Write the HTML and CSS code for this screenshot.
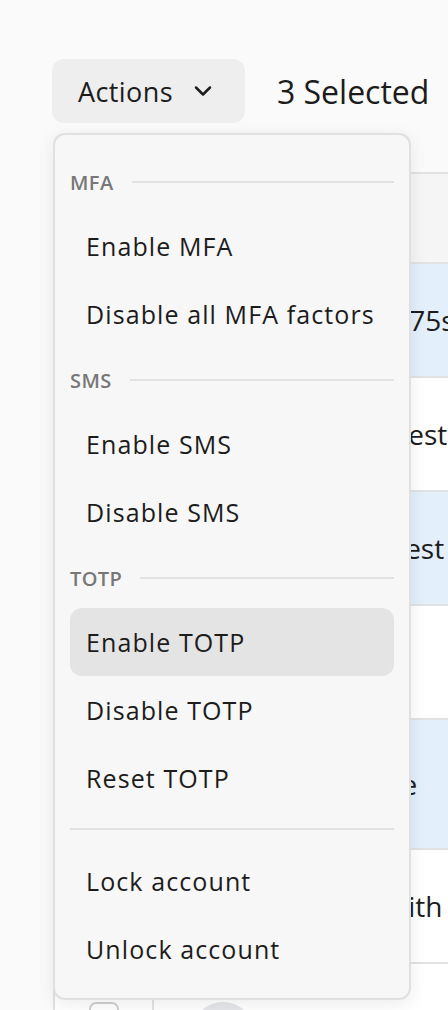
FILE: index.html
```html
<!DOCTYPE html>
<html lang="en">
<head>
<meta charset="utf-8">
<title>Users – Actions</title>
<link rel="stylesheet" href="styles.css">
</head>
<body>
<div class="page">
  <div class="toolbar">
    <button class="actions-btn" type="button">
      <span>Actions</span>
      <svg class="chev" viewBox="0 0 24 24" width="24" height="24" aria-hidden="true"><path d="M5 8.5l7 7 7-7" fill="none" stroke="#1f1f1f" stroke-width="2.5" stroke-linecap="round" stroke-linejoin="round"/></svg>
    </button>
    <span class="selected-count">3 Selected</span>
  </div>

  <div class="table">
    <div class="row head">
      <div class="cell check"><span class="box"></span></div>
      <div class="cell name">Name</div>
    </div>
    <div class="row sel">
      <div class="cell check"><span class="box on"></span></div>
      <div class="cell name"><span class="avatar">TU</span><span class="txt">test_user_75s</span></div>
    </div>
    <div class="row">
      <div class="cell check"><span class="box"></span></div>
      <div class="cell name"><span class="avatar">MT</span><span class="txt">Mariana Test</span></div>
    </div>
    <div class="row sel">
      <div class="cell check"><span class="box on"></span></div>
      <div class="cell name"><span class="avatar">JT</span><span class="txt">Julianne Test</span></div>
    </div>
    <div class="row">
      <div class="cell check"><span class="box"></span></div>
      <div class="cell name"><span class="avatar">JD</span><span class="txt">Jane Doe</span></div>
    </div>
    <div class="row sel tall">
      <div class="cell check"><span class="box on"></span></div>
      <div class="cell name"><span class="avatar">LM</span><span class="txt">Lea Moore</span></div>
    </div>
    <div class="row">
      <div class="cell check"><span class="box"></span></div>
      <div class="cell name"><span class="avatar">LS</span><span class="txt">Laurie Smith</span></div>
    </div>
    <div class="row">
      <div class="cell check"><span class="box"></span></div>
      <div class="cell name"><span class="avatar">MM</span><span class="txt">Kyle Klocko</span></div>
    </div>
  </div>

  <div class="menu" role="menu">
    <div class="group-label"><span>MFA</span><i></i></div>
    <div class="item">Enable MFA</div>
    <div class="item">Disable all MFA factors</div>
    <div class="group-label"><span>SMS</span><i></i></div>
    <div class="item">Enable SMS</div>
    <div class="item">Disable SMS</div>
    <div class="group-label"><span>TOTP</span><i></i></div>
    <div class="item active">Enable TOTP</div>
    <div class="item">Disable TOTP</div>
    <div class="item">Reset TOTP</div>
    <div class="sep"></div>
    <div class="item">Lock account</div>
    <div class="item">Unlock account</div>
  </div>
</div>
</body>
</html>
```

FILE: styles.css
```css
* { box-sizing: border-box; }
html, body {
  margin: 0;
  background: #fafafa;
  overflow: hidden;
}
body {
  font-family: "Open Sans", "Noto Sans", sans-serif;
  color: #1c1c1c;
}
.page {
  position: relative;
  width: 448px;
  height: 1010px;
  padding: 59px 0 0 52px;
}
.toolbar {
  display: flex;
  align-items: center;
  gap: 32px;
  height: 64px;
}
.actions-btn {
  display: flex;
  align-items: center;
  gap: 18px;
  height: 64px;
  padding: 0 30px 0 26px;
  border: none;
  border-radius: 12px;
  background: #eeeeee;
  font: inherit;
  font-size: 27px;
  font-weight: 500;
  letter-spacing: 0.4px;
  color: #1c1c1c;
}
.chev { display: block; }
.selected-count {
  font-size: 32px;
  font-weight: 500;
  white-space: nowrap;
}

.table {
  margin: 49px 0 0 1px;
  width: 640px;
  border-left: 2px solid #e2e2e2;
  border-top: 2px solid #e2e2e2;
}
.row {
  display: flex;
  height: 114px;
  background: #ffffff;
  border-bottom: 2px solid #e2e2e2;
}
.row.head { height: 90px; background: #f5f5f5; }
.row.sel { background: #e3effb; }
.row.tall { height: 130px; }
.cell {
  display: flex;
  align-items: center;
}
.cell.check {
  width: 99px;
  justify-content: center;
  border-right: 2px solid #e2e2e2;
}
.box {
  width: 30px;
  height: 30px;
  border: 2px solid #cfcfcf;
  border-radius: 7px;
  background: #fff;
}
.box.on { background: #2f7de1; border-color: #2f7de1; }
.cell.name {
  padding-left: 38px;
  gap: 24px;
  font-size: 28px;
  white-space: nowrap;
}
.row.head .cell.name { font-weight: 700; font-size: 24px; color: #555; }
.avatar {
  width: 62px;
  height: 62px;
  border-radius: 50%;
  background: #e4e6ea;
  display: flex;
  align-items: center;
  justify-content: center;
  font-size: 20px;
  font-weight: 700;
  color: #333;
  flex: none;
}
.row:last-child .cell { align-items: flex-start; padding-top: 38px; }

.menu {
  position: absolute;
  top: 133px;
  left: 53px;
  width: 358px;
  padding: 15px;
  background: #f7f7f7;
  border: 2px solid #e0e0e0;
  border-radius: 12px;
  box-shadow: 0 4px 18px rgba(0, 0, 0, 0.08);
  display: flex;
  flex-direction: column;
}
.group-label {
  display: flex;
  align-items: center;
  gap: 18px;
  height: 62px;
  padding-top: 2px;
  font-size: 20px;
  font-weight: 600;
  color: #777777;
  letter-spacing: 0.4px;
}
.group-label i {
  flex: 1;
  height: 2px;
  background: #e2e2e2;
}
.item {
  display: flex;
  align-items: center;
  height: 68px;
  padding: 0 16px;
  border-radius: 12px;
  font-size: 25px;
  letter-spacing: 1.1px;
  color: #1c1c1c;
  white-space: nowrap;
}
.item.active { background: #e4e4e4; }
.sep {
  height: 2px;
  background: #e2e2e2;
  margin: 16px 0 17px;
}
```
